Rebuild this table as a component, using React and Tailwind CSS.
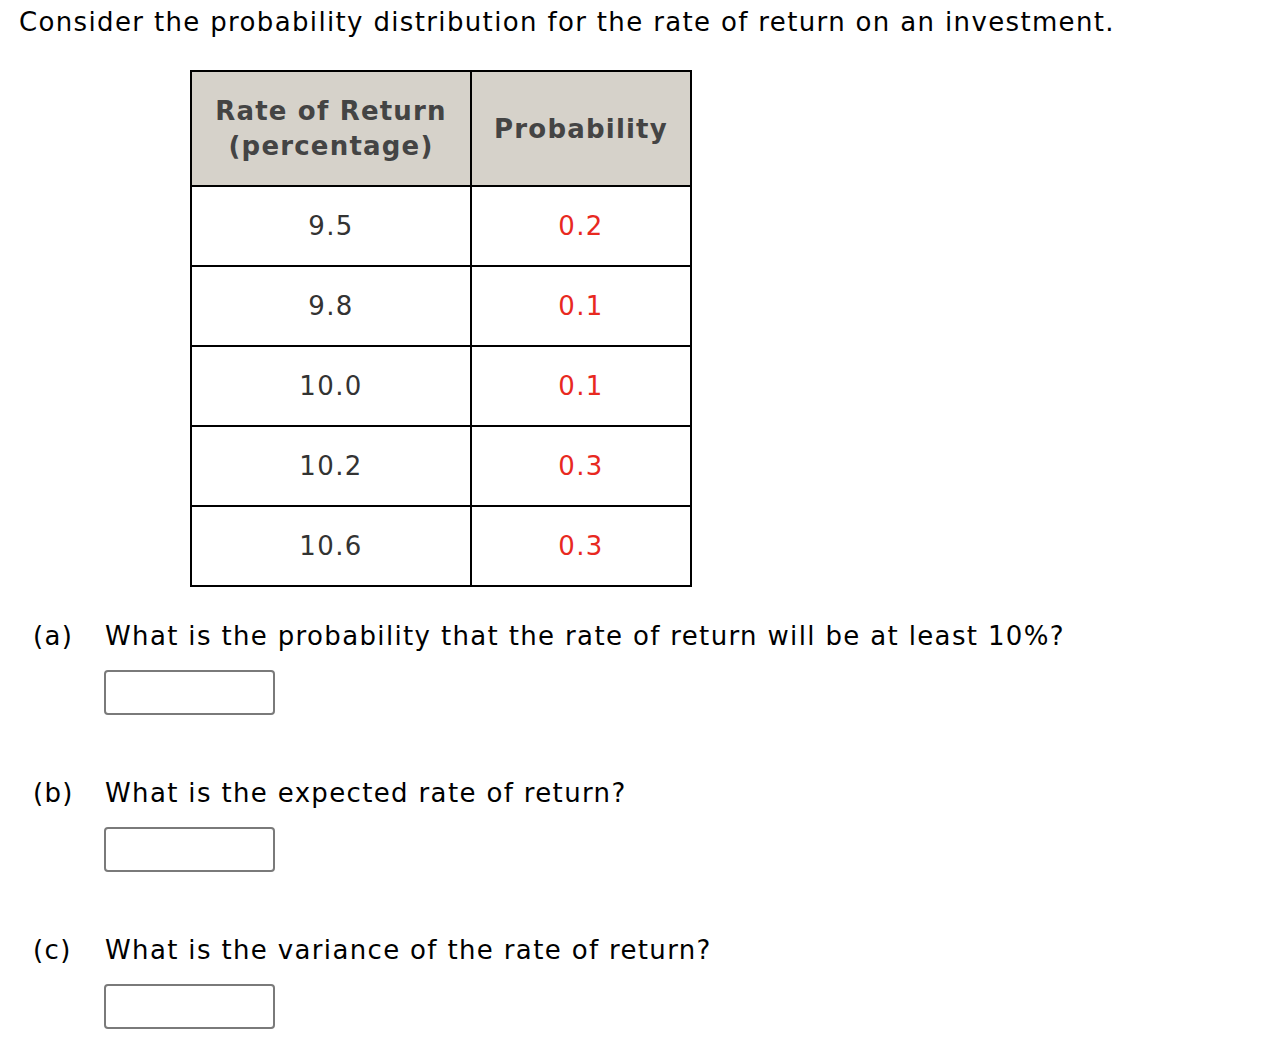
const ROWS = [
  ["9.5", "0.2"],
  ["9.8", "0.1"],
  ["10.0", "0.1"],
  ["10.2", "0.3"],
  ["10.6", "0.3"],
];

const QUESTIONS = [
  ["(a)", "What is the probability that the rate of return will be at least 10%?"],
  ["(b)", "What is the expected rate of return?"],
  ["(c)", "What is the variance of the rate of return?"],
];

export default function App() {
  return (
    <div className="min-h-[1056px] bg-white text-black text-[26px] leading-[32px] tracking-[1.35px] font-['DejaVu_Sans',Verdana,sans-serif]">
      <p className="pl-[19px] pt-[6px]">
        Consider the probability distribution for the rate of return on an investment.
      </p>

      <table className="ml-[190px] mt-[32px] border-collapse border-2 border-black">
        <thead>
          <tr className="bg-[#d6d2ca] text-[#444] font-bold h-[115px] tracking-[1.2px]">
            <th className="w-[280px] border-2 border-black leading-[35px] px-2">
              Rate of Return
              <br />
              (percentage)
            </th>
            <th className="w-[220px] border-2 border-black">Probability</th>
          </tr>
        </thead>
        <tbody>
          {ROWS.map(([rate, prob]) => (
            <tr key={rate} className="h-[80px]">
              <td className="border-2 border-black text-center text-[#333]">{rate}</td>
              <td className="border-2 border-black text-center text-[#e8291f]">{prob}</td>
            </tr>
          ))}
        </tbody>
      </table>

      <div className="pl-[33px] pt-[33px] flex flex-col gap-[62px]">
        {QUESTIONS.map(([label, text]) => (
          <div key={label} className="flex">
            <span className="w-[72px] shrink-0">{label}</span>
            <div className="flex flex-col gap-[18px]">
              <span>{text}</span>
              <input
                type="text"
                className="w-[171px] h-[45px] -ml-px border-2 border-[#7a7a7a] rounded-[4px] outline-none"
              />
            </div>
          </div>
        ))}
      </div>
    </div>
  );
}
